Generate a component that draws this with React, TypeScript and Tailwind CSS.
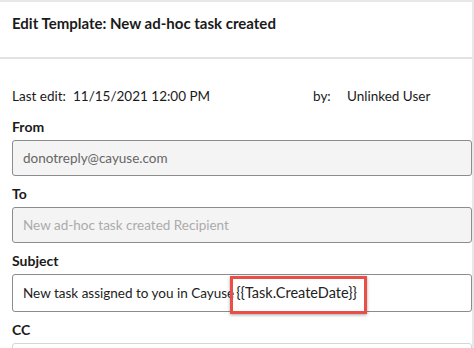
import React from 'react';

const labelCls = "h-5 leading-5 text-[14px] font-bold text-[#1a1a1a] mb-[3px]";

export default function App() {
  return (
    <div className="w-[474px] h-[348px] overflow-hidden bg-white border-t-2 border-r-2 border-[#e8e8e8] font-['Lato',sans-serif] text-[#1a1a1a]">
      {/* header */}
      <div className="h-[57px] px-3 pt-[11px] border-b-2 border-[#e2e2e2]">
        <h1 className="h-5 leading-5 text-[15px] font-bold">Edit Template: New ad-hoc task created</h1>
      </div>

      <div className="pl-3">
        <div className="flex h-5 leading-5 text-[13.5px] mt-[27px]">
          <span className="w-[61px]">Last edit:</span>
          <span className="w-[240px]">11/15/2021 12:00 PM</span>
          <span className="w-[34px]">by:</span>
          <span>Unlinked User</span>
        </div>

        <div className="mt-[11px]">
          <div className={labelCls}>From</div>
          <div className="h-[36px] flex items-center px-[10px] bg-[#f4f4f4] border border-[#8c8c8c] rounded-[3px] text-[13.5px] text-[#666]">
            donotreply@cayuse.com
          </div>
        </div>

        <div className="mt-2">
          <div className={labelCls}>To</div>
          <div className="h-[36px] flex items-center px-[10px] bg-[#f4f4f4] border border-[#8c8c8c] rounded-[3px] text-[13.5px] text-[#ababab]">
            New ad-hoc task created Recipient
          </div>
        </div>

        <div className="mt-2">
          <div className={labelCls}>Subject</div>
          <div className="h-[38px] flex items-stretch px-[10px] bg-white border border-[#8c8c8c] rounded-[3px] text-[13.5px] text-[#222] whitespace-nowrap">
            <span className="flex items-center">New task assigned to you in Cayuse</span>
            <span className="relative flex items-center ml-[2px] text-[14.5px]">
              {"{{Task.CreateDate}}"}
              <span className="absolute -left-[6px] -right-[10px] top-px -bottom-[3px] border-[3.5px] border-[#ea4f47] shadow-[0_1px_3px_rgba(0,0,0,0.35)]" />
            </span>
          </div>
        </div>

        <div className="mt-2">
          <div className={labelCls}>CC</div>
          <div className="h-[36px] bg-white border border-[#d6d6d6] rounded-[3px]" />
        </div>
      </div>
    </div>
  );
}
